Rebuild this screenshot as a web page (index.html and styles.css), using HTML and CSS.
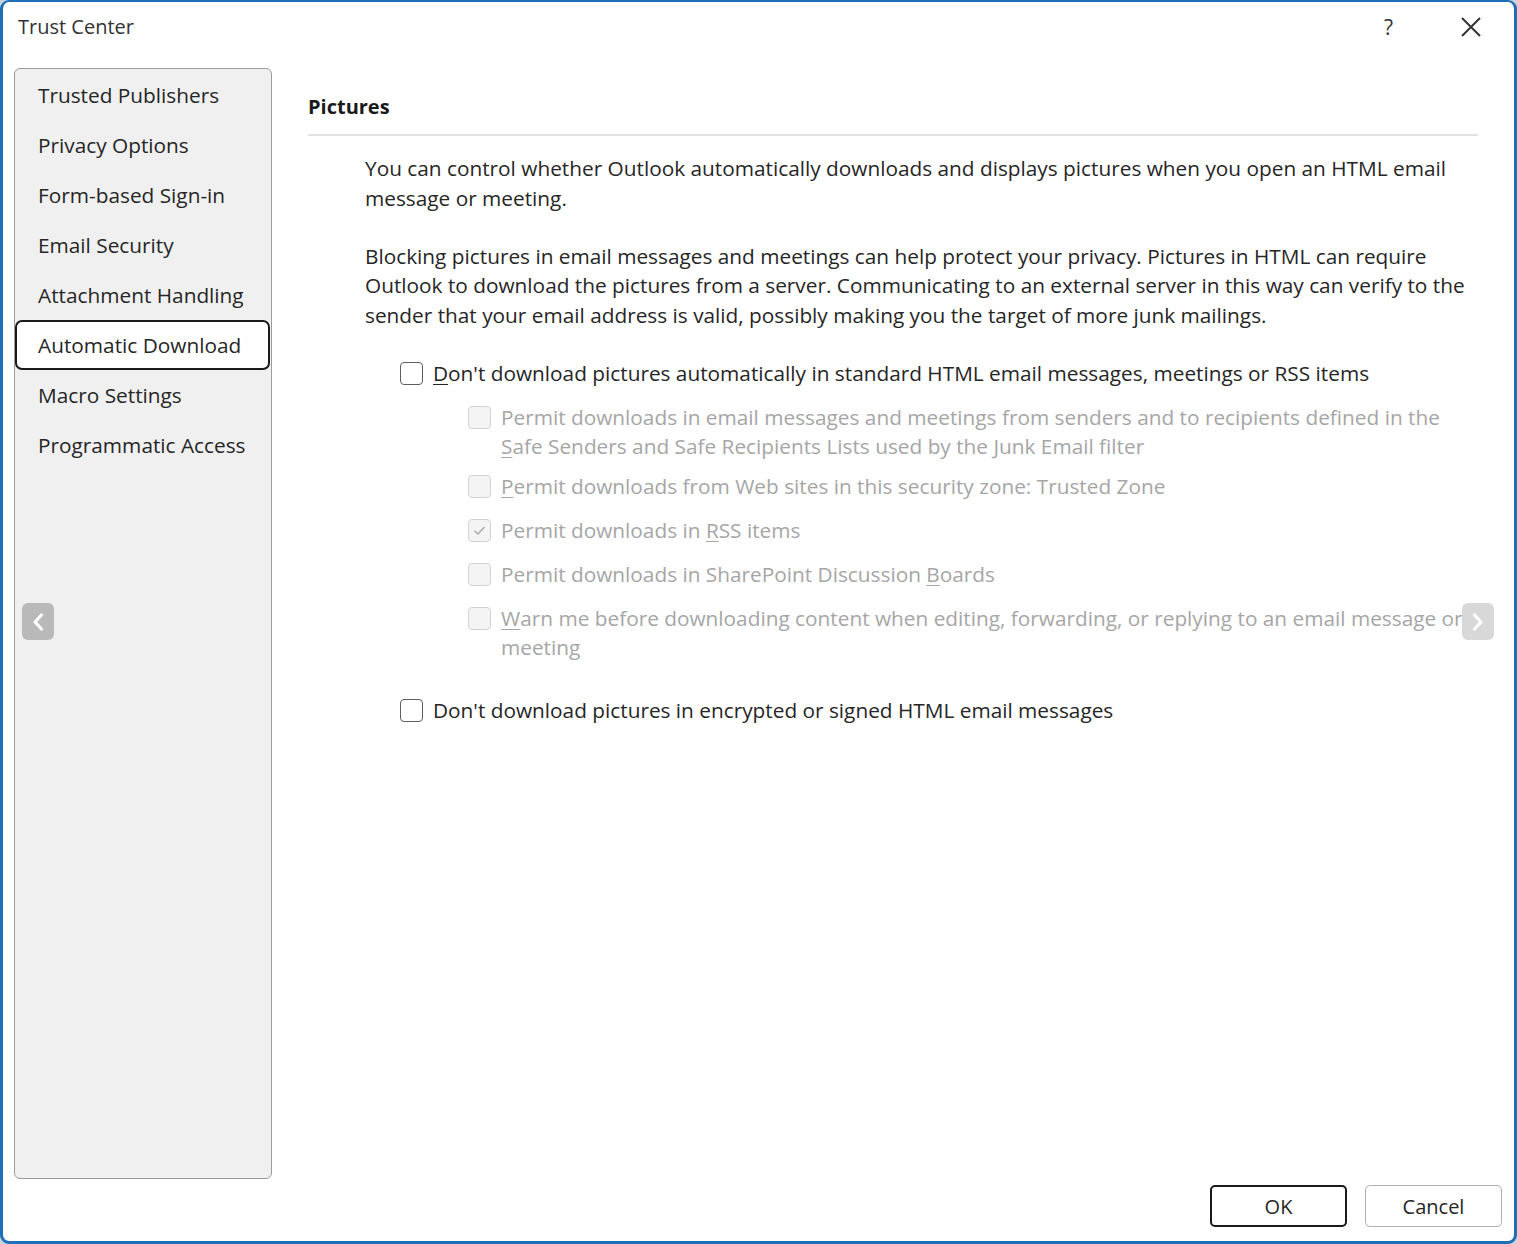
FILE: index.html
```html
<!DOCTYPE html>
<html lang="en">
<head>
<meta charset="utf-8">
<title>Trust Center</title>
<link rel="stylesheet" href="styles.css">
</head>
<body>
<div class="window">
  <div class="titlebar">
    <span class="title">Trust Center</span>
    <div class="title-actions">
      <span class="help">?</span>
      <svg class="close" width="22" height="22" viewBox="0 0 22 22"><path d="M2 2 L20 20 M20 2 L2 20" stroke="#333" stroke-width="2" fill="none"/></svg>
    </div>
  </div>
  <div class="main">
    <nav class="sidebar">
      <div class="nav-item">Trusted Publishers</div>
      <div class="nav-item">Privacy Options</div>
      <div class="nav-item">Form-based Sign-in</div>
      <div class="nav-item">Email Security</div>
      <div class="nav-item">Attachment Handling</div>
      <div class="nav-item selected">Automatic Download</div>
      <div class="nav-item">Macro Settings</div>
      <div class="nav-item">Programmatic Access</div>
    </nav>
    <div class="pane">
      <section class="content">
        <h2 class="heading">Pictures</h2>
        <div class="sep"></div>
        <p class="para">You can control whether Outlook automatically downloads and displays pictures when you open an HTML email message or meeting.</p>
        <p class="para">Blocking pictures in email messages and meetings can help protect your privacy. Pictures in HTML can require Outlook to download the pictures from a server. Communicating to an external server in this way can verify to the sender that your email address is valid, possibly making you the target of more junk mailings.</p>
        <div class="opt top">
          <span class="box"></span>
          <span class="label"><u>D</u>on't download pictures automatically in standard HTML email messages, meetings or RSS items</span>
        </div>
        <div class="subs">
          <div class="opt sub multi">
            <span class="box dis"></span>
            <span class="label dim">Permit downloads in email messages and meetings from senders and to recipients defined in the <u>S</u>afe Senders and Safe Recipients Lists used by the Junk Email filter</span>
          </div>
          <div class="opt sub">
            <span class="box dis"></span>
            <span class="label dim"><u>P</u>ermit downloads from Web sites in this security zone: Trusted Zone</span>
          </div>
          <div class="opt sub">
            <span class="box dis"><svg width="15" height="15" viewBox="0 0 15 15"><path d="M2.5 7.8 L6 11 L12.5 4" stroke="#a8a8a8" stroke-width="1.5" fill="none"/></svg></span>
            <span class="label dim">Permit downloads in <u>R</u>SS items</span>
          </div>
          <div class="opt sub">
            <span class="box dis"></span>
            <span class="label dim">Permit downloads in SharePoint Discussion <u>B</u>oards</span>
          </div>
          <div class="opt sub">
            <span class="box dis"></span>
            <span class="label dim"><u>W</u>arn me before downloading content when editing, forwarding, or replying to an email message or meeting</span>
          </div>
        </div>
        <div class="opt top second">
          <span class="box"></span>
          <span class="label">Don't download pictures in encrypted or signed HTML email messages</span>
        </div>
      </section>
      <div class="footer">
        <button class="btn primary">OK</button>
        <button class="btn">Cancel</button>
      </div>
    </div>
  </div>
  <div class="arrow arrow-prev"><svg width="14" height="20" viewBox="0 0 14 20"><path d="M10.5 3 L4 10 L10.5 17" stroke="#fff" stroke-width="3.2" fill="none" stroke-linecap="round" stroke-linejoin="round"/></svg></div>
  <div class="arrow arrow-next"><svg width="14" height="20" viewBox="0 0 14 20"><path d="M3.5 3 L10 10 L3.5 17" stroke="#fff" stroke-width="3.2" fill="none" stroke-linecap="round" stroke-linejoin="round"/></svg></div>
</div>
</body>
</html>
```
FILE: styles.css
```css
html, body {
  margin: 0;
  padding: 0;
  background: #c9d3dc;
}
body {
  font-family: "Open Sans", "Noto Sans", sans-serif;
  color: #262626;
}
.window {
  position: relative;
  box-sizing: border-box;
  width: 1517px;
  height: 1244px;
  background: #fff;
  border: 3px solid #1f6fb6;
  border-top-width: 2px;
  border-radius: 9px;
  display: flex;
  flex-direction: column;
  overflow: hidden;
}
.titlebar {
  height: 66px;
  display: flex;
  align-items: flex-start;
  justify-content: space-between;
  padding: 0 0 0 15px;
  flex: none;
}
.title {
  font-size: 20px;
  line-height: 50px;
  color: #333;
}
.title-actions {
  display: flex;
  align-items: center;
  height: 50px;
}
.help {
  font-size: 21px;
  color: #333;
  margin-right: 67px;
}
.close {
  margin-right: 32px;
}
.main {
  flex: 1;
  display: flex;
  align-items: flex-start;
  padding-left: 11px;
  min-height: 0;
}
.sidebar {
  box-sizing: border-box;
  width: 258px;
  height: 1111px;
  flex: none;
  background: #f0f0f0;
  border: 1px solid #9c9c9c;
  border-radius: 6px;
  padding-top: 1px;
}
.nav-item {
  box-sizing: border-box;
  height: 50px;
  margin-right: 1px;
  padding-left: 21px;
  font-size: 20.8px;
  line-height: 46px;
  color: #262626;
  border: 2px solid transparent;
  border-radius: 7px;
  white-space: nowrap;
}
.nav-item.selected {
  background: #fff;
  border-color: #1a1a1a;
}
.pane {
  flex: 1;
  height: 100%;
  display: flex;
  flex-direction: column;
  padding-left: 36px;
  padding-right: 12px;
}
.content {
  flex: 1;
  padding-right: 22px;
}
.heading {
  margin: 24px 0 0 0;
  font-size: 20px;
  line-height: 30px;
  font-weight: 700;
  color: #1a1a1a;
}
.sep {
  height: 2px;
  background: #e2e2e2;
  margin: 12px 2px 0 0;
}
.para {
  margin: 18px 0 0 57px;
  font-size: 20.8px;
  line-height: 29.6px;
  color: #262626;
}
.para + .para {
  margin-top: 28.5px;
}
.opt {
  display: flex;
  align-items: flex-start;
  font-size: 20.8px;
  line-height: 29.5px;
}
.opt.top {
  margin-left: 92px;
  margin-top: 28.5px;
}
.opt.second {
  margin-top: 33px;
}
.subs {
  margin-left: 160px;
  padding-top: 14.5px;
}
.opt.sub {
  margin-bottom: 14.5px;
}
.opt.sub.multi {
  margin-bottom: 10px;
}
.box {
  box-sizing: border-box;
  flex: none;
  width: 23px;
  height: 23px;
  margin-top: 3.5px;
  margin-right: 10px;
  border: 1.6px solid #5e5e5e;
  border-radius: 4px;
  background: #fff;
  display: flex;
  align-items: center;
  justify-content: center;
}
.box.dis {
  border-color: #d2d2d2;
  background: #f4f4f4;
}
.label u {
  text-underline-offset: 3px;
  text-decoration-thickness: 1px;
}
.label.dim {
  color: #a6a6a6;
}
.footer {
  flex: none;
  display: flex;
  justify-content: flex-end;
  gap: 18px;
  padding-bottom: 14px;
}
.btn {
  box-sizing: border-box;
  width: 137px;
  height: 42px;
  font-family: "Open Sans", "Noto Sans", sans-serif;
  font-size: 20px;
  color: #262626;
  background: #fff;
  border: 1px solid #b0b0b0;
  border-radius: 5px;
  padding: 0;
}
.btn.primary {
  border: 2px solid #1a1a1a;
}
.arrow {
  position: absolute;
  top: 601px;
  width: 32px;
  height: 37px;
  background: #b9b9b9;
  border-radius: 6px;
  display: flex;
  align-items: center;
  justify-content: center;
}
.arrow-prev {
  left: 19px;
}
.arrow-next {
  left: 1459px;
  background: #d8d8d8;
}
```
